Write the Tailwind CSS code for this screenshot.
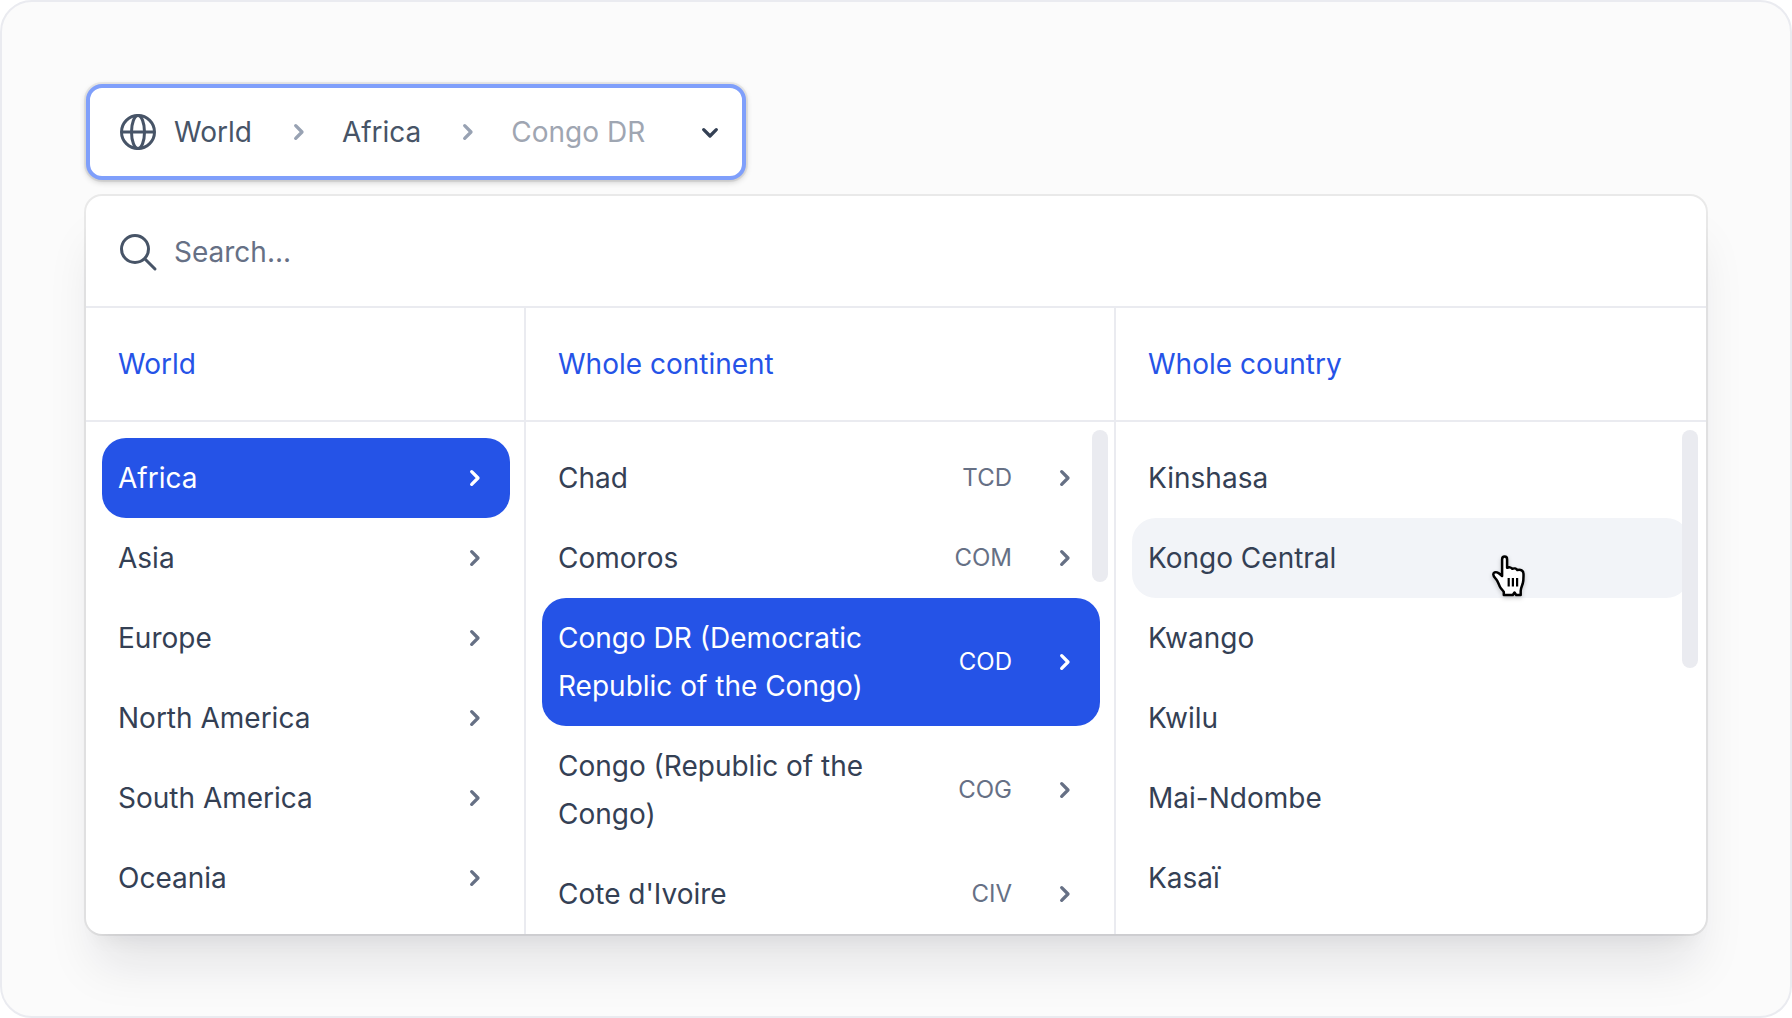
<!DOCTYPE html>
<html lang="en">
<head>
<meta charset="utf-8">
<meta name="viewport" content="width=device-width, initial-scale=1">
<title>Region picker</title>
<script src="https://cdn.jsdelivr.net/npm/@tailwindcss/browser@4"></script>
</head>
<body class="bg-white font-['Inter',sans-serif] text-[28px] leading-[48px] text-[#344054]">
<svg class="hidden" aria-hidden="true">
  <symbol id="chevron" viewBox="0 0 40 40"><path d="M17.700 13.700l6.300 6.300-6.300 6.300" fill="none" stroke="currentColor" stroke-width="3.300" stroke-linecap="round" stroke-linejoin="round"/></symbol>
</svg>
<main class="min-h-screen rounded-[32px] border-2 border-[#eaebf0] bg-[#fbfbfb] px-[84px] py-[82px]">

  <!-- Selected path -->
  <div class="flex h-24 w-fit items-center rounded-2xl border-4 border-[#7f9ffb] bg-white pr-3 pl-7 shadow-[0_0_0_2px_rgb(0_0_0/0.06),0_2px_6px_rgb(0_0_0/0.2)]">
    <button class="flex items-center gap-4 text-[#475467]">
      <svg class="size-10" viewBox="0 0 40 40" fill="none" stroke="currentColor" stroke-width="3"><circle cx="20" cy="20" r="16.5"/><ellipse cx="20" cy="20" rx="6.5" ry="16.5"/><path d="M3.500 20h33"/></svg>
      World
    </button>
    <svg class="mr-6 ml-[26px] size-10 text-[#98a2b3]"><use href="#chevron"/></svg>
    <button class="text-[#475467]">Africa</button>
    <svg class="mr-6 ml-[26px] size-10 text-[#98a2b3]"><use href="#chevron"/></svg>
    <button class="text-[#9fa6b2]">Congo DR</button>
    <button class="ml-[45px]" aria-label="Toggle list"><svg class="size-10 rotate-90"><use href="#chevron"/></svg></button>
  </div>

  <!-- Drop-down panel -->
  <div class="mt-4 rounded-2xl bg-white shadow-[0_0_0_2px_rgb(0_0_0/0.07),0_40px_50px_-10px_rgb(16_24_40/0.1),0_16px_20px_-12px_rgb(16_24_40/0.06)]">
    <label class="flex h-28 items-center gap-4 border-b-2 border-[#eaebf0] px-8 pt-[2px]">
      <svg class="size-10 text-[#475467]" viewBox="0 0 40 40" fill="none" stroke="currentColor" stroke-width="3" stroke-linecap="round"><circle cx="17" cy="17" r="13.500"/><path d="M27 27l10 10"/></svg>
      <input type="text" placeholder="Search..." aria-label="Search" class="min-w-0 flex-1 outline-none placeholder:text-[#667085]">
    </label>
    <div class="grid grid-cols-[440px_1fr_1fr]">

      <section class="border-r-2 border-[#eaebf0]">
        <div class="flex h-[114px] items-center border-b-2 border-[#eaebf0] px-8"><button class="text-[#2553e7]">World</button></div>
        <div class="py-4 pr-[14px] pl-4">
          <button class="flex w-full items-center justify-between rounded-3xl bg-[#2553e7] p-4 text-left text-white">Africa<svg class="size-10"><use href="#chevron"/></svg></button>
          <button class="flex w-full items-center justify-between rounded-3xl p-4 text-left">Asia<svg class="size-10 text-[#667085]"><use href="#chevron"/></svg></button>
          <button class="flex w-full items-center justify-between rounded-3xl p-4 text-left">Europe<svg class="size-10 text-[#667085]"><use href="#chevron"/></svg></button>
          <button class="flex w-full items-center justify-between rounded-3xl p-4 text-left">North America<svg class="size-10 text-[#667085]"><use href="#chevron"/></svg></button>
          <button class="flex w-full items-center justify-between rounded-3xl p-4 text-left">South America<svg class="size-10 text-[#667085]"><use href="#chevron"/></svg></button>
          <button class="flex w-full items-center justify-between rounded-3xl p-4 text-left">Oceania<svg class="size-10 text-[#667085]"><use href="#chevron"/></svg></button>
        </div>
      </section>

      <section class="border-r-2 border-[#eaebf0]">
        <div class="flex h-[114px] items-center border-b-2 border-[#eaebf0] px-8"><button class="text-[#2553e7]">Whole continent</button></div>
        <div class="relative pt-4 pr-[14px] pl-4">
          <button class="flex w-full items-center gap-8 rounded-3xl p-4 text-left"><span class="flex-1">Chad</span><span class="text-2xl text-[#667085]">TCD</span><svg class="size-10 text-[#667085]"><use href="#chevron"/></svg></button>
          <button class="flex w-full items-center gap-8 rounded-3xl p-4 text-left"><span class="flex-1">Comoros</span><span class="text-2xl text-[#667085]">COM</span><svg class="size-10 text-[#667085]"><use href="#chevron"/></svg></button>
          <button class="flex w-full items-center gap-8 rounded-3xl bg-[#2553e7] p-4 text-left text-white"><span class="flex-1">Congo DR (Democratic Republic of the Congo)</span><span class="text-2xl">COD</span><svg class="size-10"><use href="#chevron"/></svg></button>
          <button class="flex w-full items-center gap-8 rounded-3xl p-4 text-left"><span class="flex-1">Congo (Republic of the Congo)</span><span class="text-2xl text-[#667085]">COG</span><svg class="size-10 text-[#667085]"><use href="#chevron"/></svg></button>
          <button class="flex w-full items-center gap-8 rounded-3xl p-4 text-left"><span class="flex-1">Cote d'Ivoire</span><span class="text-2xl text-[#667085]">CIV</span><svg class="size-10 text-[#667085]"><use href="#chevron"/></svg></button>
          <div class="absolute top-2 right-[6px] h-[152px] w-4 rounded-full bg-[#eaebf0]"></div>
        </div>
      </section>

      <section>
        <div class="flex h-[114px] items-center border-b-2 border-[#eaebf0] px-8"><button class="text-[#2553e7]">Whole country</button></div>
        <div class="relative px-4 pt-4">
          <button class="block w-full rounded-3xl p-4 text-left">Kinshasa</button>
          <button class="relative block w-full rounded-3xl bg-[#f2f4f8] p-4 text-left">Kongo Central
            <svg class="absolute top-9 right-[164px] h-11 w-9 drop-shadow-[0_2px_2px_rgb(0_0_0/0.2)]" viewBox="0 0 36 44" fill="#fff" stroke="#000" stroke-width="2.500" stroke-linejoin="round"><path d="M13.800 41v-3c-1.200-2-3-3.500-4-5.500-1.300-2.500-1.800-5-3.600-7.200-1.300-1.600-3-3.200-2.900-5 .1-1.900 2-2.500 3.800-1.900 2 .7 3.500 2.300 5 3.600V5.500c0-3.900 5-3.900 5 0v8.300c1.800-.9 4.200-.6 5.200 1 1.700-.8 4-.2 5 1.200 3.400-.9 6.200.4 6.200 3.800 0 3.400.2 7-.8 10-1 2.700-1.900 4.600-2 7.200v4h-4.500l-1.700-2.500-1.700 2.500z"/><path d="M18.700 24v8.500M22.900 24v8.500M27.100 24v8.500" stroke-width="2.200"/></svg>
          </button>
          <button class="block w-full rounded-3xl p-4 text-left">Kwango</button>
          <button class="block w-full rounded-3xl p-4 text-left">Kwilu</button>
          <button class="block w-full rounded-3xl p-4 text-left">Mai-Ndombe</button>
          <button class="block w-full rounded-3xl p-4 text-left">Kasaï</button>
          <div class="absolute top-2 right-2 h-[238px] w-4 rounded-full bg-[#eaebf0]"></div>
        </div>
      </section>
    </div>
  </div>
</main>
</body>
</html>
